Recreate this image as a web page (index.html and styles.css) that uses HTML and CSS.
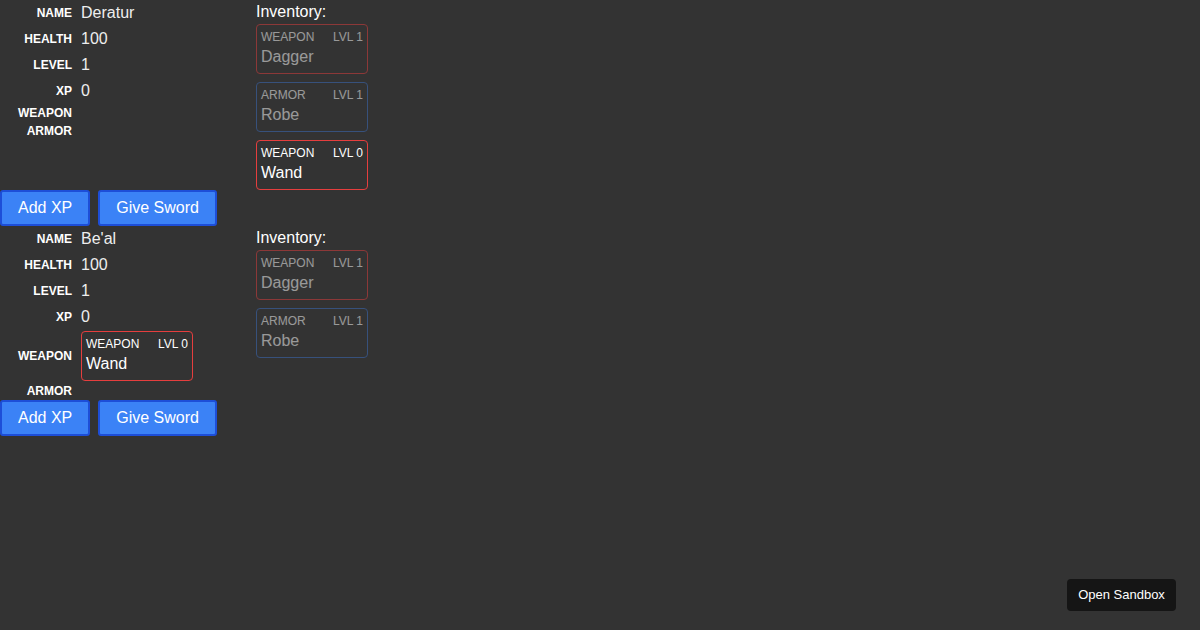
FILE: index.html
```html
<!DOCTYPE html>
<html>
<head>
<meta charset="utf-8">
<link rel="stylesheet" href="styles.css">
</head>
<body>
<div class="character">
  <div class="top">
    <div class="stats">
      <div class="label">NAME</div><div class="value">Deratur</div>
      <div class="label">HEALTH</div><div class="value">100</div>
      <div class="label">LEVEL</div><div class="value">1</div>
      <div class="label">XP</div><div class="value">0</div>
      <div class="label">WEAPON</div><div class="value empty"></div>
      <div class="label">ARMOR</div><div class="value empty"></div>
    </div>
    <div class="inventory">
      <div class="inv-title">Inventory:</div>
      <div class="item weapon faded"><div class="item-head"><span>WEAPON</span><span>LVL 1</span></div><div class="item-name">Dagger</div></div>
      <div class="item armor faded"><div class="item-head"><span>ARMOR</span><span>LVL 1</span></div><div class="item-name">Robe</div></div>
      <div class="item weapon"><div class="item-head"><span>WEAPON</span><span>LVL 0</span></div><div class="item-name">Wand</div></div>
    </div>
  </div>
  <div class="actions"><button class="btn">Add XP</button><button class="btn">Give Sword</button></div>
</div>
<div class="character">
  <div class="top">
    <div class="stats">
      <div class="label">NAME</div><div class="value">Be'al</div>
      <div class="label">HEALTH</div><div class="value">100</div>
      <div class="label">LEVEL</div><div class="value">1</div>
      <div class="label">XP</div><div class="value">0</div>
      <div class="label">WEAPON</div><div class="value"><div class="item weapon"><div class="item-head"><span>WEAPON</span><span>LVL 0</span></div><div class="item-name">Wand</div></div></div>
      <div class="label">ARMOR</div><div class="value empty"></div>
    </div>
    <div class="inventory">
      <div class="inv-title">Inventory:</div>
      <div class="item weapon faded"><div class="item-head"><span>WEAPON</span><span>LVL 1</span></div><div class="item-name">Dagger</div></div>
      <div class="item armor faded"><div class="item-head"><span>ARMOR</span><span>LVL 1</span></div><div class="item-name">Robe</div></div>
    </div>
  </div>
  <div class="actions"><button class="btn">Add XP</button><button class="btn">Give Sword</button></div>
</div>
<a class="sandbox">Open Sandbox</a>
</body>
</html>
```
FILE: styles.css
```css
html, body {
  margin: 0;
  padding: 0;
  background: #333333;
  color: #eeeeee;
  font-family: "Liberation Sans", Arial, sans-serif;
  font-size: 16px;
}
.top {
  display: grid;
  grid-template-columns: 256px 112px;
  align-items: start;
}
.stats {
  display: grid;
  grid-template-columns: 72px max-content;
  column-gap: 9px;
  align-items: center;
}
.label {
  font-size: 12px;
  font-weight: bold;
  line-height: 18px;
  text-align: right;
  color: #ffffff;
}
.value {
  line-height: 24px;
  padding: 1px 0;
}
.value.empty {
  padding: 0;
  line-height: 0;
}
.inventory {
  display: flex;
  flex-direction: column;
  gap: 8px;
}
.inv-title {
  line-height: 24px;
  margin-bottom: -8px;
  color: #ffffff;
}
.item {
  width: 112px;
  box-sizing: border-box;
  border: 1px solid #e53e3e;
  border-radius: 4px;
  padding: 3px 4px 5px;
  color: #ffffff;
}
.item.armor {
  border-color: #3b6fc4;
}
.item.faded {
  opacity: 0.5;
}
.item-head {
  display: flex;
  justify-content: space-between;
  font-size: 12px;
  line-height: 18px;
}
.item-name {
  font-size: 16px;
  line-height: 22px;
}
.actions {
  display: flex;
  gap: 8px;
}
.btn {
  font-family: "Liberation Sans", Arial, sans-serif;
  font-size: 16px;
  height: 36px;
  padding: 0 16px;
  background: #3b82f6;
  color: #ffffff;
  border: 2px solid #1d4ed8;
  border-radius: 3px;
  margin: 0;
}
.sandbox {
  position: fixed;
  right: 24px;
  bottom: 19px;
  width: 109px;
  height: 32px;
  box-sizing: border-box;
  background: #151515;
  color: #ffffff;
  font-size: 13px;
  line-height: 32px;
  text-align: center;
  border-radius: 4px;
}
```
